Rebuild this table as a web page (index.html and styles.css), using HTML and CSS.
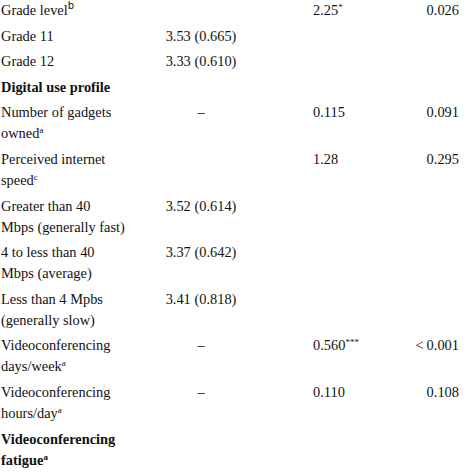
FILE: index.html
```html
<!DOCTYPE html>
<html>
<head>
<meta charset="utf-8">
<link rel="stylesheet" href="styles.css">
</head>
<body>
<div class="table">
  <div class="c1">Grade level<sup class="sb">b</sup></div><div class="c2"></div><div class="c3">2.25<sup>*</sup></div><div class="c4">0.026</div>
  <div class="c1">Grade 11</div><div class="c2">3.53 (0.665)</div><div class="c3"></div><div class="c4"></div>
  <div class="c1">Grade 12</div><div class="c2">3.33 (0.610)</div><div class="c3"></div><div class="c4"></div>
  <div class="c1 bold">Digital use profile</div><div class="c2"></div><div class="c3"></div><div class="c4"></div>
  <div class="c1">Number of gadgets<br>owned<sup>a</sup></div><div class="c2">–</div><div class="c3">0.115</div><div class="c4">0.091</div>
  <div class="c1">Perceived internet<br>speed<sup>c</sup></div><div class="c2"></div><div class="c3">1.28</div><div class="c4">0.295</div>
  <div class="c1">Greater than 40<br>Mbps (generally fast)</div><div class="c2">3.52 (0.614)</div><div class="c3"></div><div class="c4"></div>
  <div class="c1">4 to less than 40<br>Mbps (average)</div><div class="c2">3.37 (0.642)</div><div class="c3"></div><div class="c4"></div>
  <div class="c1">Less than 4 Mpbs<br>(generally slow)</div><div class="c2">3.41 (0.818)</div><div class="c3"></div><div class="c4"></div>
  <div class="c1">Videoconferencing<br>days/week<sup>a</sup></div><div class="c2">–</div><div class="c3">0.560<sup>***</sup></div><div class="c4">&lt;&#8201;0.001</div>
  <div class="c1">Videoconferencing<br>hours/day<sup>a</sup></div><div class="c2">–</div><div class="c3">0.110</div><div class="c4">0.108</div>
  <div class="c1 bold">Videoconferencing<br>fatigue<sup>a</sup></div><div class="c2"></div><div class="c3"></div><div class="c4"></div>
</div>
</body>
</html>
```
FILE: styles.css
```css
html, body {
  margin: 0;
  padding: 0;
  background: #fff;
}
body {
  font-family: "Liberation Serif", "Times New Roman", serif;
  font-size: 14.4px;
  color: #111;
  line-height: 21px;
  overflow: hidden;
}
.table {
  display: grid;
  grid-template-columns: 124px 152px 114px 68px;
  row-gap: 4.6px;
  padding: 0 16px 0 1px;
}
.c1 {
  text-align: left;
  white-space: nowrap;
}
.c2 {
  text-align: center;
}
.c3 {
  text-align: left;
  padding-left: 36px;
}
.c4 {
  text-align: right;
}
.bold {
  font-weight: bold;
}
sup {
  font-size: 9px;
  line-height: 0;
  vertical-align: 5px;
}
sup.sb {
  font-family: "DejaVu Sans", sans-serif;
  font-size: 10px;
  vertical-align: 6px;
}
```
